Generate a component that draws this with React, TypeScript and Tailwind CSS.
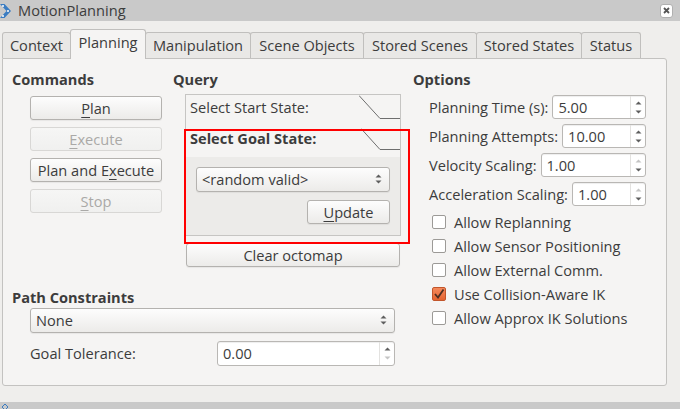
import React from "react";
import clsx from "clsx";

const Mn = ({ children }: { children: React.ReactNode }) => (
  <span className="underline decoration-1 underline-offset-[3px]">{children}</span>
);

const Btn = ({ children, disabled, className }: any) => (
  <div
    className={clsx(
      "flex h-6 items-center justify-center rounded-[3px] border bg-linear-to-b pb-px",
      disabled
        ? "border-[#d8d7d5] from-[#f6f6f5] to-[#f0f0ef] text-[#aaa9a7]"
        : "border-[#b4b2af] from-[#fdfdfd] to-[#ecebe9] text-[#3c3c3c] shadow-[0_1px_1px_rgba(0,0,0,0.06)]",
      className
    )}
  >
    {children}
  </div>
);

const Tri = ({ up, on }: { up: boolean; on: boolean }) => (
  <svg width="7" height="4" viewBox="0 0 7 4">
    <path d={up ? "M3.5 0.5 L6.5 3.5 L0.5 3.5 Z" : "M0.5 0.5 L6.5 0.5 L3.5 3.5 Z"} fill={on ? "#5e5e5e" : "#c4c4c4"} />
  </svg>
);

const Spin = ({ value, up = true, down = true, className }: any) => (
  <div className={clsx("flex h-6 rounded-[3px] border border-[#b9b7b4] bg-white shadow-[inset_0_1px_1px_rgba(0,0,0,0.07)]", className)}>
    <div className="flex flex-1 items-center pb-px pl-[5px]">{value}</div>
    <div className="flex w-[15px] flex-col items-center justify-center gap-[5px] border-l border-[#e3e2e0]">
      <Tri up on={up} />
      <Tri up={false} on={down} />
    </div>
  </div>
);

const Combo = ({ value, className }: any) => (
  <div className={clsx("flex h-[25px] items-center rounded-[3px] border border-[#b4b2af] bg-linear-to-b from-[#fdfdfd] to-[#ecebe9] pb-px pl-[5px] pr-[7px] shadow-[0_1px_1px_rgba(0,0,0,0.06)]", className)}>
    <span className="flex-1">{value}</span>
    <div className="flex flex-col gap-[2px]">
      <Tri up on />
      <Tri up={false} on />
    </div>
  </div>
);

const Check = ({ label, checked }: { label: string; checked?: boolean }) => (
  <div className="flex h-6 items-center pl-[19px]">
    <div
      className={clsx(
        "flex h-[14px] w-[14px] items-center justify-center rounded-[2px] border",
        checked ? "border-[#c2552a] bg-linear-to-b from-[#f4895b] to-[#e4632f]" : "border-[#9c9a97] bg-white"
      )}
    >
      {checked && (
        <svg width="12" height="12" viewBox="0 0 12 12">
          <path d="M2 6 L5 9.5 L10.5 1.5" fill="none" stroke="#4d2f22" strokeWidth="1.8" />
        </svg>
      )}
    </div>
    <span className="mb-px ml-2">{label}</span>
  </div>
);

const SpinRow = ({ label, value, up, down }: any) => (
  <div className="flex h-6 items-center pl-4">
    <span className="mb-px whitespace-nowrap">{label}</span>
    <Spin value={value} up={up} down={down} className="ml-[4px] flex-1" />
  </div>
);

const tabs = [
  { name: "Context", w: "w-[69px]" },
  { name: "Planning", w: "w-[76px]", active: true },
  { name: "Manipulation", w: "w-[106px]" },
  { name: "Scene Objects", w: "w-[114px]" },
  { name: "Stored Scenes", w: "w-[114px]" },
  { name: "Stored States", w: "w-[106px]" },
  { name: "Status", w: "w-[60px]" },
];

export default function App() {
  return (
    <div className="flex h-[409px] w-[680px] flex-col overflow-hidden bg-[#efeeec] font-['Open_Sans',sans-serif] text-[14.6px] leading-5 text-[#3c3c3c]">
      {/* title bar */}
      <div className="flex h-[21px] items-center bg-[#c9c9c9]">
        <svg width="12" height="16" viewBox="0 0 12 16" className="ml-0">
          <path d="M0 1 L4.5 1 L11 8 L4.5 15 L0 15 L6.5 8 Z" fill="#3a7cc2" />
          <circle cx="3" cy="3" r="1" fill="#fff" />
          <circle cx="8" cy="8" r="1" fill="#fff" />
          <circle cx="3" cy="13" r="1" fill="#fff" />
        </svg>
        <span className="mb-px ml-[6px] text-[#3c3c3c]">MotionPlanning</span>
        <div className="ml-auto mr-[7px] flex h-[14px] w-[13px] items-center justify-center rounded-[3px] border border-[#b0b0b0] bg-white">
          <svg width="7" height="7" viewBox="0 0 7 7">
            <path d="M1 1 L6 6 M6 1 L1 6" stroke="#555" strokeWidth="1.8" />
          </svg>
        </div>
      </div>

      <div className="px-[2px] pt-2">
        {/* tabs */}
        <div className="flex h-[29px] items-end">
          {tabs.map((t, i) => (
            <div
              key={t.name}
              className={clsx(
                "flex items-center justify-center rounded-t-[3px] border-x border-t border-[#c0bfbd]",
                t.w,
                i > 0 && "-ml-px",
                t.active ? "relative z-10 -mb-px h-[30px] bg-[#f5f4f3] pb-[6px]" : "h-[26px] bg-[#e9e8e6] pb-[2px]"
              )}
            >
              {t.name}
            </div>
          ))}
        </div>

        {/* panel */}
        <div className="relative h-[328px] w-[665px] rounded-b-[3px] rounded-tr-[3px] border border-[#c3c2c0] bg-[#f5f4f3] pl-[9px] pt-[10px]">
          <div className="flex">
            {/* left group */}
            <div className="flex w-[389px] flex-col">
              <div className="flex">
                {/* commands */}
                <div className="w-[150px]">
                  <div className="h-5 font-bold">Commands</div>
                  <div className="mt-[7px] flex flex-col gap-[7px] pl-[18px]">
                    <Btn><span><Mn>P</Mn>lan</span></Btn>
                    <Btn disabled><span><Mn>E</Mn>xecute</span></Btn>
                    <Btn><span>Plan and E<Mn>x</Mn>ecute</span></Btn>
                    <Btn disabled><span><Mn>S</Mn>top</span></Btn>
                  </div>
                </div>
                {/* query */}
                <div className="ml-[11px] w-[228px]">
                  <div className="h-5 font-bold">Query</div>
                  <div className="ml-3 mt-[5px] w-[216px] border border-[#c6c5c3]">
                    <div className="relative h-[33px] pl-1 pt-[2px]">
                      Select Start State:
                      <svg width="41" height="25" viewBox="0 0 41 25" className="absolute right-0 top-0">
                        <path d="M0 0.5 L21 23.5 L41 23.5" fill="none" stroke="#6e6e6e" strokeWidth="1" />
                      </svg>
                    </div>
                    <div className="relative h-[29px] pl-1 font-bold">
                      Select Goal State:
                      <svg width="39" height="22" viewBox="0 0 39 22" className="absolute right-0 top-0">
                        <path d="M0 0.5 L19 21.5 L39 21.5" fill="none" stroke="#6e6e6e" strokeWidth="1" />
                      </svg>
                    </div>
                    <div className="flex h-[78px] flex-col bg-[#ecebe9] px-[10px] pt-[10px]">
                      <Combo value="<random valid>" />
                      <Btn className="mt-2 w-[83px] self-end">
                        <span><Mn>U</Mn>pdate</span>
                      </Btn>
                    </div>
                  </div>
                  <Btn className="ml-[13px] mt-[7px] w-[214px]">Clear octomap</Btn>
                </div>
              </div>

              {/* path constraints */}
              <div className="mt-5 h-5 font-bold">Path Constraints</div>
              <div className="ml-[18px] mt-px w-[365px]">
                <Combo value="None" />
                <div className="mt-2 flex h-[25px] items-center">
                  <span className="mb-px flex-1">Goal Tolerance:</span>
                  <Spin value="0.00" down={false} className="h-[25px] w-[178px]" />
                </div>
              </div>
            </div>

            {/* options */}
            <div className="ml-3 w-[233px]">
              <div className="h-5 font-bold">Options</div>
              <div className="mt-[6px] flex flex-col gap-[5px]">
                <SpinRow label="Planning Time (s):" value="5.00" up down />
                <SpinRow label="Planning Attempts:" value="10.00" up down />
                <SpinRow label="Velocity Scaling:" value="1.00" up={false} down />
                <SpinRow label="Acceleration Scaling:" value="1.00" up={false} down />
              </div>
              <div className="mt-1 flex flex-col">
                <Check label="Allow Replanning" />
                <Check label="Allow Sensor Positioning" />
                <Check label="Allow External Comm." />
                <Check label="Use Collision-Aware IK" checked />
                <Check label="Allow Approx IK Solutions" />
              </div>
            </div>
          </div>

          {/* annotation */}
          <div className="pointer-events-none absolute left-[181px] top-[70px] h-[115px] w-[226px] border-2 border-[#ff0000]" />
        </div>
      </div>

      <div className="flex-1" />
      <div className="flex h-[7px] items-start bg-[#c9c9c9] pl-[1px]">
        <svg width="8" height="7" viewBox="0 0 8 7">
          <path d="M4 2 L7 5 L4 8 L1 5 Z" fill="none" stroke="#3a7cc2" strokeWidth="1" />
        </svg>
      </div>
    </div>
  );
}
